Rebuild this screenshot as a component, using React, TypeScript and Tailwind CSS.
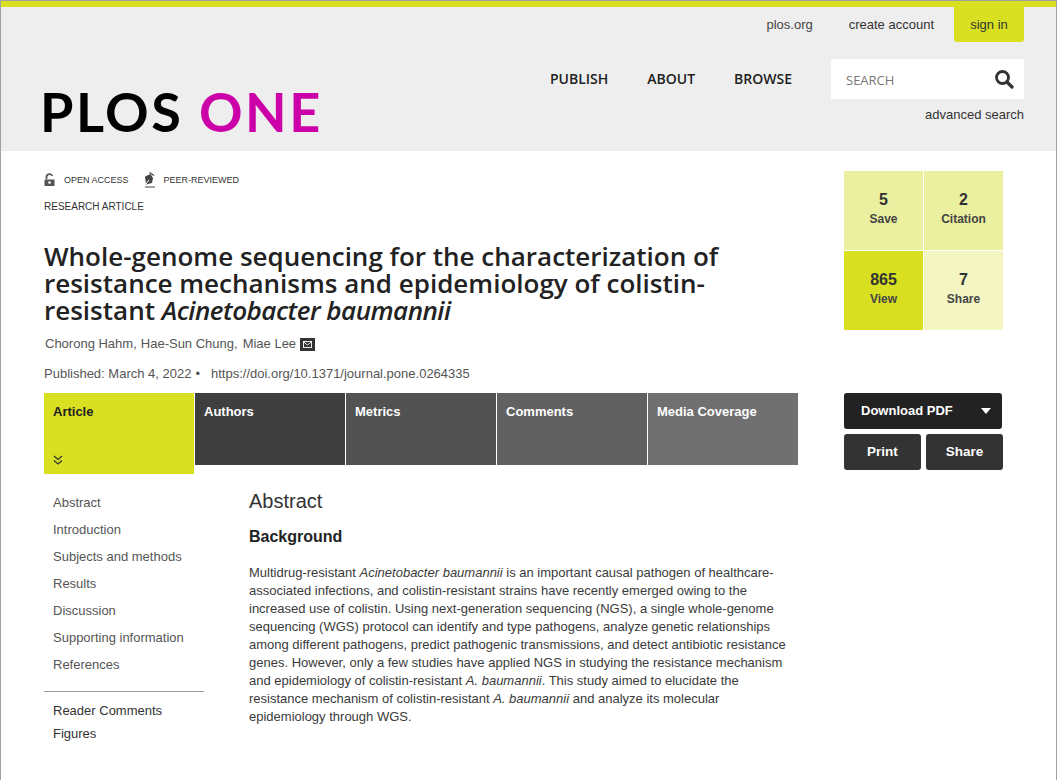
import React from "react";

const Stat = ({ n, l, c }: { n: string; l: string; c: string }) => (
  <div className={`flex h-[79px] w-[79px] flex-col items-center pt-[19px] ${c}`}>
    <div className="text-[16px] font-bold leading-[20px] text-[#333]">{n}</div>
    <div className="text-[12px] font-bold leading-[18px] text-[#444]">{l}</div>
  </div>
);

export default function App() {
  const tabs = [
    ["Authors", "bg-[#3f3f3f]"],
    ["Metrics", "bg-[#525252]"],
    ["Comments", "bg-[#616161]"],
    ["Media Coverage", "bg-[#707070]"],
  ];
  const nav = ["Abstract", "Introduction", "Subjects and methods", "Results", "Discussion", "Supporting information", "References"];
  return (
    <div className="h-[780px] w-[1057px] overflow-hidden border border-b-0 border-[#a0a0a0] bg-white font-['Liberation_Sans',Arial,sans-serif]">
      <div className="h-[6px] bg-[#d9e021]" />
      <header className="h-[144px] bg-[#eeeeee]">
        <div className="flex h-[35px] items-start justify-end pr-[32px] text-[13px] text-[#333]">
          <span className="mt-[10px] mr-[36px] leading-[16px] text-[#444]">plos.org</span>
          <span className="mt-[10px] mr-[20px] leading-[16px]">create account</span>
          <span className="flex h-[35px] w-[70px] items-center justify-center rounded-b-[3px] bg-[#d9e021]">sign in</span>
        </div>
        <div className="flex items-start pl-[39px] pr-[32px]">
          <div className="mt-[42px] whitespace-nowrap font-['Lato',sans-serif] text-[54px] font-bold leading-[56px] tracking-[2.5px] text-black">
            PLOS <span className="text-[#cc00a8]">ONE</span>
          </div>
          <nav className="ml-auto mt-[27px] flex gap-[39px] font-['Open_Sans',sans-serif] text-[14px] font-semibold leading-[20px] text-[#222]">
            <span>PUBLISH</span>
            <span>ABOUT</span>
            <span>BROWSE</span>
          </nav>
          <div className="ml-[39px] mt-[17px] flex w-[193px] flex-col items-end">
            <div className="flex h-[40px] w-full items-center justify-between bg-white pl-[15px] pr-[10px]">
              <span className="mt-[3px] font-['Open_Sans',sans-serif] text-[13px] text-[#777]">SEARCH</span>
              <svg width="20" height="20" viewBox="0 0 20 20" fill="none" stroke="#333" strokeWidth="2.8">
                <circle cx="8.5" cy="8.5" r="6" />
                <path d="M13 13l5 5" strokeLinecap="round" strokeWidth="3.2" />
              </svg>
            </div>
            <span className="mt-[8px] text-[13px] leading-[16px] text-[#333]">advanced search</span>
          </div>
        </div>
      </header>
      <main className="flex pl-[43px]">
        <div className="w-[755px]">
          <div className="mt-[21px] flex items-center text-[9px] leading-[14px] text-[#333]">
            <svg width="11" height="14" viewBox="0 0 11 14" fill="#555">
              <path d="M0.5 6.5h10v6.5h-10z" />
              <path d="M2.5 6V4a3 3 0 0 1 5.8-1" fill="none" stroke="#555" strokeWidth="1.8" />
              <circle cx="5.5" cy="9.5" r="1.3" fill="#fff" />
            </svg>
            <span className="ml-[9px]">OPEN ACCESS</span>
            <svg className="ml-[14px]" width="12" height="16" viewBox="0 0 12 16" fill="#444">
              <path d="M2 4.5L7.5 2 10 6l-1 5-6 1.5z" />
              <path d="M6.5 0.5l4.5 3" stroke="#444" fill="none" strokeWidth="1.2" />
              <path d="M3 12l3-4" stroke="#fff" fill="none" />
              <path d="M2 15h10" stroke="#444" fill="none" />
            </svg>
            <span className="ml-[9px]">PEER-REVIEWED</span>
          </div>
          <div className="mt-[12px] text-[10px] leading-[14px] text-[#333]">RESEARCH ARTICLE</div>
          <h1 className="mt-[29px] w-[700px] font-['Open_Sans',sans-serif] text-[26px] font-semibold leading-[27px] text-[#222]">
            Whole-genome sequencing for the characterization of resistance mechanisms and epidemiology of colistin-resistant <em className="tracking-[-0.5px]">Acinetobacter baumannii</em>
          </h1>
          <div className="mt-[11px] flex items-center pl-[1px] text-[13px] leading-[18px] text-[#555]">
            <span>Chorong Hahm,</span>
            <span className="ml-[4px]">Hae-Sun Chung,</span>
            <span className="ml-[5px]">Miae Lee</span>
            <span className="ml-[4px] flex h-[13px] w-[15px] items-center justify-center bg-[#333]">
              <svg width="9" height="7" viewBox="0 0 9 7" fill="none" stroke="#fff" strokeWidth="0.9">
                <rect x="0.5" y="0.5" width="8" height="6" />
                <path d="M1 1.2l3.5 2.8L8 1.2" />
              </svg>
            </span>
          </div>
          <div className="mt-[12px] flex text-[13px] leading-[18px] text-[#555]">
            <span>Published: March 4, 2022</span>
            <span className="ml-[4px]">•</span>
            <span className="ml-[11px]">https://doi.org/10.1371/journal.pone.0264335</span>
          </div>
          <div className="mt-[10px] flex items-start gap-[1px]">
            <div className="flex h-[81px] w-[150px] flex-col justify-between bg-[#d9e021] pb-[9px] pl-[9px] pt-[11px]">
              <span className="text-[13px] font-bold leading-[16px] text-[#222]">Article</span>
              <svg width="10" height="10" viewBox="0 0 10 10" fill="none" stroke="#333" strokeWidth="1.2">
                <path d="M1 1l4 3.5L9 1M1 5.5L5 9l4-3.5" />
              </svg>
            </div>
            {tabs.map(([t, c]) => (
              <div key={t} className={`h-[72px] w-[150px] pl-[9px] pt-[11px] text-[13px] font-bold leading-[16px] text-white ${c}`}>
                {t}
              </div>
            ))}
          </div>
          <div className="flex">
            <aside className="mt-[15px] w-[205px] shrink-0">
              <ul className="w-[160px] border-b border-[#999] pb-[13px] text-[13px] leading-[27px] text-[#555]">
                {nav.map((n) => (
                  <li key={n} className="whitespace-nowrap pl-[9px]">{n}</li>
                ))}
              </ul>
              <div className="mt-[7px] pl-[9px] text-[13px] leading-[23px] text-[#333]">
                <div>Reader Comments</div>
                <div>Figures</div>
              </div>
            </aside>
            <article className="w-[550px] text-[#333]">
              <h2 className="mt-[14px] text-[20px] leading-[26px] text-[#333]">Abstract</h2>
              <h3 className="mt-[12px] text-[16px] font-bold leading-[22px] text-[#222]">Background</h3>
              <p className="mt-[16px] w-[550px] text-[13px] leading-[18px] text-[#3a3a3a]">
                Multidrug-resistant <em>Acinetobacter baumannii</em> is an important causal pathogen of healthcare-associated infections, and colistin-resistant strains have recently emerged owing to the increased use of colistin. Using next-generation sequencing (NGS), a single whole-genome sequencing (WGS) protocol can identify and type pathogens, analyze genetic relationships among different pathogens, predict pathogenic transmissions, and detect antibiotic resistance genes. However, only a few studies have applied NGS in studying the resistance mechanism and epidemiology of colistin-resistant <em>A. baumannii</em>. This study aimed to elucidate the resistance mechanism of colistin-resistant <em>A. baumannii</em> and analyze its molecular epidemiology through WGS.
              </p>
            </article>
          </div>
        </div>
        <aside className="ml-[45px] mt-[20px] w-[160px]">
          <div className="grid w-[160px] grid-cols-[79px_79px] gap-[1px]">
            <Stat n="5" l="Save" c="bg-[#ebf0a0]" />
            <Stat n="2" l="Citation" c="bg-[#ebf0a0]" />
            <Stat n="865" l="View" c="bg-[#d9e021]" />
            <Stat n="7" l="Share" c="bg-[#f3f6c3]" />
          </div>
          <div className="mt-[63px] flex h-[36px] w-[158px] items-center justify-between rounded-[3px] bg-[#222] pl-[17px] pr-[11px] text-[13px] font-bold text-white">
            <span>Download PDF</span>
            <svg width="10" height="6" viewBox="0 0 10 6" fill="#fff"><path d="M0 0h10L5 6z" /></svg>
          </div>
          <div className="mt-[5px] flex gap-[5px]">
            <div className="flex h-[36px] w-[77px] items-center justify-center rounded-[3px] bg-[#333] text-[13.5px] font-bold text-white">Print</div>
            <div className="flex h-[36px] w-[77px] items-center justify-center rounded-[3px] bg-[#333] text-[13.5px] font-bold text-white">Share</div>
          </div>
        </aside>
      </main>
    </div>
  );
}
